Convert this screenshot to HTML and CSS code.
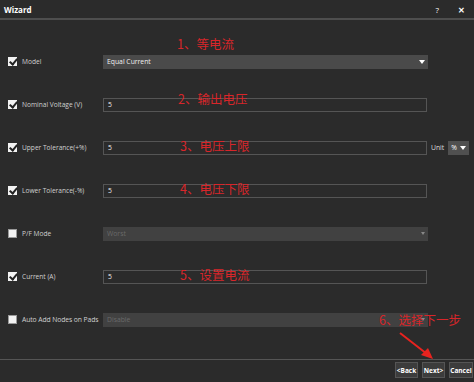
FILE: index.html
```html
<!DOCTYPE html>
<html lang="zh-CN">
<head>
    <meta charset="UTF-8">
    <title>Wizard</title>
    <link rel="stylesheet" href="styles.css">
</head>
<body>
    <div class="titlebar">
        <span class="title">Wizard</span>
        <span class="help">?</span>
        <span class="close">&#x2715;</span>
    </div>

    <div class="form">
        <div class="row">
            <span class="check on"></span>
            <label>Model</label>
            <div class="select">Equal Current<span class="caret"></span></div>
        </div>
        <div class="row">
            <span class="check on"></span>
            <label>Nominal Voltage (V)</label>
            <div class="input">5</div>
        </div>
        <div class="row">
            <span class="check on"></span>
            <label>Upper Tolerance(+%)</label>
            <div class="input">5</div>
            <span class="unit">Unit</span>
            <div class="mini-select">%<span class="caret"></span></div>
        </div>
        <div class="row">
            <span class="check on"></span>
            <label>Lower Tolerance(-%)</label>
            <div class="input">5</div>
        </div>
        <div class="row">
            <span class="check"></span>
            <label>P/F Mode</label>
            <div class="select disabled">Worst<span class="caret"></span></div>
        </div>
        <div class="row">
            <span class="check on"></span>
            <label>Current (A)</label>
            <div class="input">5</div>
        </div>
        <div class="row">
            <span class="check"></span>
            <label class="wide">Auto Add Nodes on Pads</label>
            <div class="select disabled">Disable<span class="caret"></span></div>
        </div>
    </div>

    <div class="footer">
        <button class="btn-back">&lt;Back</button>
        <button class="btn-next">Next&gt;</button>
        <button class="btn-cancel">Cancel</button>
    </div>

    <!-- red notes drawn over the dialog -->
    <span class="note n1">1、等电流</span>
    <span class="note n2">2、输出电压</span>
    <span class="note n3">3、电压上限</span>
    <span class="note n4">4、电压下限</span>
    <span class="note n5">5、设置电流</span>
    <span class="note n6">6、选择下一步</span>
    <svg class="arrow" width="474" height="382" viewBox="0 0 474 382">
        <line x1="400" y1="333" x2="427" y2="354" stroke="#e8231f" stroke-width="2"/>
        <polygon points="433,359 421,355 428,348" fill="#e8231f"/>
    </svg>
</body>
</html>
```

FILE: styles.css
```css
html, body {
    margin: 0;
    padding: 0;
}

body {
    width: 474px;
    height: 382px;
    background-color: #2b2b2b;
    font-family: 'Open Sans', 'Noto Sans', sans-serif;
    color: #d6d6d6;
    display: flex;
    flex-direction: column;
    position: relative;
    overflow: hidden;
}

.titlebar {
    height: 18px;
    border-bottom: 2px solid #4e4e4e;
    display: flex;
    align-items: center;
    padding: 0 9px 0 4px;
    font-size: 8px;
    color: #fff;
}

.title {
    font-weight: bold;
    flex: 1;
}

.help {
    margin-right: 19px;
    font-size: 8px;
}

.close {
    font-size: 8px;
    font-weight: bold;
}

.form {
    padding-top: 20px;
}

.row {
    height: 43px;
    display: flex;
    align-items: center;
    padding-left: 8px;
}

.check {
    width: 9px;
    height: 9px;
    background-color: #f2f2f2;
    border: 1px solid #9a9a9a;
    box-sizing: border-box;
    margin-right: 5px;
    position: relative;
    flex-shrink: 0;
}

.check.on {
    border-color: #f2f2f2;
}

.check.on::after {
    content: "";
    position: absolute;
    left: 2px;
    top: -1px;
    width: 3px;
    height: 6px;
    border: solid #222;
    border-width: 0 2px 2px 0;
    transform: rotate(40deg);
}

label {
    width: 81px;
    flex-shrink: 0;
    font-size: 6.6px;
    color: #d0d0d0;
    white-space: nowrap;
}

label.wide {
    font-size: 6.8px;
    letter-spacing: -0.1px;
}

.select, .input {
    width: 325px;
    height: 14px;
    box-sizing: border-box;
    font-size: 6.8px;
    display: flex;
    align-items: center;
    padding-left: 4px;
    position: relative;
    flex-shrink: 0;
}

.select {
    background-color: #4a4a4a;
    color: #f0f0f0;
}

.select.disabled {
    background-color: #414141;
    color: #6a6a6a;
}

.input {
    border: 1px solid #555;
    width: 324px;
    color: #eee;
}

.caret {
    position: absolute;
    right: 3px;
    top: 5px;
    border-left: 3px solid transparent;
    border-right: 3px solid transparent;
    border-top: 4px solid #fff;
}

.select.disabled .caret {
    border-top-color: #888;
    border-width: 3px 2px 0 2px;
}

.unit {
    font-size: 6.8px;
    color: #ddd;
    margin-left: 4px;
}

.mini-select {
    width: 21px;
    height: 14px;
    background-color: #505050;
    font-size: 6.8px;
    color: #fff;
    box-sizing: border-box;
    padding-left: 3px;
    display: flex;
    align-items: center;
    position: relative;
    margin-left: 4px;
}

.footer {
    margin-top: auto;
    border-top: 1px solid #555;
    height: 23px;
    box-sizing: border-box;
    display: flex;
    justify-content: flex-end;
    align-items: center;
    gap: 4px;
    padding: 0 1px 2px 0;
}

button {
    height: 16px;
    background-color: #3c3c3c;
    border: 1px solid #555;
    color: #fff;
    font-family: 'Open Sans', sans-serif;
    font-size: 6.5px;
    font-weight: bold;
    padding: 0;
}

.btn-back, .btn-next {
    width: 23px;
}

.btn-cancel {
    width: 24px;
}

.note {
    position: absolute;
    color: #d8262a;
    font-family: 'Noto Sans CJK SC', sans-serif;
    font-size: 12.5px;
    line-height: 1;
    white-space: nowrap;
}

.n1 { left: 177px; top: 38px; }
.n2 { left: 178px; top: 93px; }
.n3 { left: 180px; top: 140px; }
.n4 { left: 180px; top: 183px; }
.n5 { left: 180px; top: 269px; }
.n6 { left: 379px; top: 314px; }

.arrow {
    position: absolute;
    left: 0;
    top: 0;
}
```
